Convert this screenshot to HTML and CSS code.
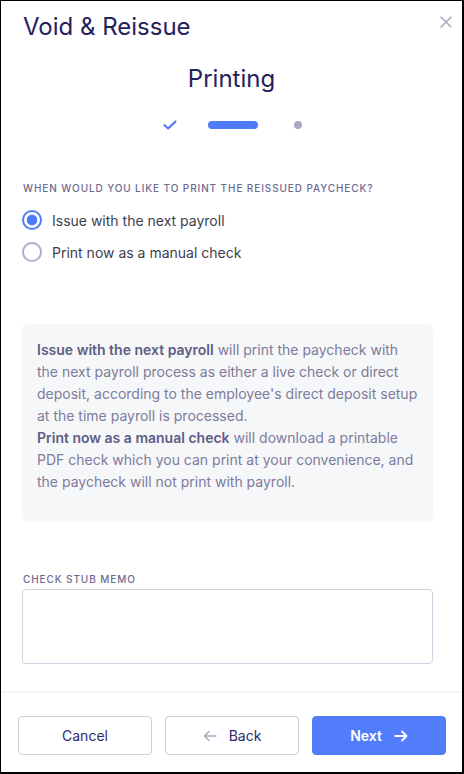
FILE: index.html
```html
<!DOCTYPE html>
<html>
<head>
<meta charset="utf-8">
<link rel="stylesheet" href="styles.css">
</head>
<body>
<div class="modal">
  <div class="content">
    <div class="header">
      <h1 class="title">Void &amp; Reissue</h1>
      <button class="close" aria-label="Close">
        <svg width="12" height="12" viewBox="0 0 12 12"><path d="M1 1L11 11M11 1L1 11" stroke="#aaa9c2" stroke-width="1.6" stroke-linecap="round"/></svg>
      </button>
    </div>
    <h2 class="step-title">Printing</h2>
    <div class="stepper">
      <svg class="step-check" width="14" height="10" viewBox="0 0 14 10"><path d="M1.5 5.2L5.2 8.5L12.5 1.5" fill="none" stroke="#4f7bfb" stroke-width="2.2" stroke-linecap="round" stroke-linejoin="round"/></svg>
      <span class="step-bar"></span>
      <span class="step-dot"></span>
    </div>
    <div class="field-label">When would you like to print the reissued paycheck?</div>
    <div class="radios">
      <label class="radio-row"><span class="radio checked"></span><span>Issue with the next payroll</span></label>
      <label class="radio-row"><span class="radio"></span><span>Print now as a manual check</span></label>
    </div>
    <div class="info">
      <b>Issue with the next payroll</b> will print the paycheck with the next payroll process as either a live check or direct deposit, according to the employee's direct deposit setup at the time payroll is processed.<br>
      <b>Print now as a manual check</b> will download a printable PDF check which you can print at your convenience, and the paycheck will not print with payroll.
    </div>
    <div class="field-label memo-label">Check stub memo</div>
    <div class="memo"></div>
  </div>
  <div class="footer">
    <button class="btn">Cancel</button>
    <button class="btn"><svg width="14" height="12" viewBox="0 0 14 12"><path d="M13 6H1.5M6 1.5L1.5 6L6 10.5" fill="none" stroke="#a9a7c8" stroke-width="1.6" stroke-linecap="round" stroke-linejoin="round"/></svg>Back</button>
    <button class="btn primary">Next<svg width="14" height="12" viewBox="0 0 14 12"><path d="M1 6H12.5M8 1.5L12.5 6L8 10.5" fill="none" stroke="#ffffff" stroke-width="1.8" stroke-linecap="round" stroke-linejoin="round"/></svg></button>
  </div>
</div>
</body>
</html>
```
FILE: styles.css
```css
* { box-sizing: border-box; }
html, body { margin: 0; padding: 0; background: #fff; }
body { font-family: Inter, "Noto Sans", sans-serif; }

.modal {
  width: 464px;
  height: 774px;
  border-style: solid;
  border-color: #000;
  border-width: 1px 2px 2px 1px;
  display: flex;
  flex-direction: column;
  background: #fff;
}

.content {
  padding: 11px 29px 0 21px;
  flex: 1;
}

.header {
  display: flex;
  justify-content: space-between;
  align-items: flex-start;
  padding-left: 1px;
}
.title {
  margin: 0;
  font-size: 24px;
  line-height: 30px;
  font-weight: 400;
  color: #24215e;
}
.close {
  border: 0;
  background: none;
  padding: 0;
  margin: 3px -20px 0 0;
  width: 14px;
  height: 14px;
  display: flex;
  align-items: center;
  justify-content: center;
}

.step-title {
  margin: 22px 0 0;
  text-align: center;
  font-size: 24px;
  line-height: 30px;
  font-weight: 400;
  color: #24215e;
  padding-left: 8px;
}

.stepper {
  margin-top: 26px;
  display: flex;
  justify-content: center;
  align-items: center;
  height: 10px;
  padding-left: 10px;
}
.step-check { display: block; }
.step-bar {
  width: 50px;
  height: 8px;
  border-radius: 4px;
  background: #4f7bfb;
  margin-left: 31px;
}
.step-dot {
  width: 8px;
  height: 8px;
  border-radius: 50%;
  background: #a9a7c3;
  margin-left: 36px;
}

.field-label {
  margin-top: 51px;
  padding-left: 1px;
  font-size: 10px;
  line-height: 14px;
  letter-spacing: 0.9px;
  text-transform: uppercase;
  color: #6d6a90;
  font-weight: 500;
}

.radios {
  margin-top: 15px;
  display: flex;
  flex-direction: column;
  gap: 12px;
}
.radio-row {
  display: flex;
  align-items: center;
  height: 20px;
  font-size: 14px;
  color: #3e3e4f;
  gap: 10px;
}
.radio {
  width: 20px;
  height: 20px;
  border-radius: 50%;
  border: 2px solid #aeacc8;
  background: #fff;
  flex: none;
}
.radio.checked {
  border-color: #4f7bfb;
  background: radial-gradient(circle, #4f7bfb 0 5px, #fff 5.6px);
}

.info {
  margin-top: 62px;
  background: #f6f7f9;
  border-radius: 6px;
  padding: 15px 13px 29px 15px;
  font-size: 14px;
  line-height: 22px;
  color: #7d7b9c;
}
.info b {
  color: #5f5c83;
  font-weight: 600;
}

.memo-label {
  margin-top: 50px;
}
.memo {
  margin-top: 3px;
  height: 75px;
  border: 1px solid #d3d2e2;
  border-radius: 4px;
}

.footer {
  border-top: 2px solid #f5f5f8;
  padding: 23px 16px 17px 17px;
  display: grid;
  grid-template-columns: 1fr 1fr 1fr;
  gap: 13px;
}
.btn {
  height: 39px;
  border: 1px solid #cfcde0;
  border-radius: 4px;
  background: #fff;
  font-family: Inter, "Noto Sans", sans-serif;
  font-size: 14px;
  color: #2d2a6b;
  display: flex;
  align-items: center;
  justify-content: center;
  gap: 12px;
  padding: 0;
}
.btn.primary {
  background: #527dfa;
  border-color: #527dfa;
  color: #fff;
  font-weight: 600;
}
```
